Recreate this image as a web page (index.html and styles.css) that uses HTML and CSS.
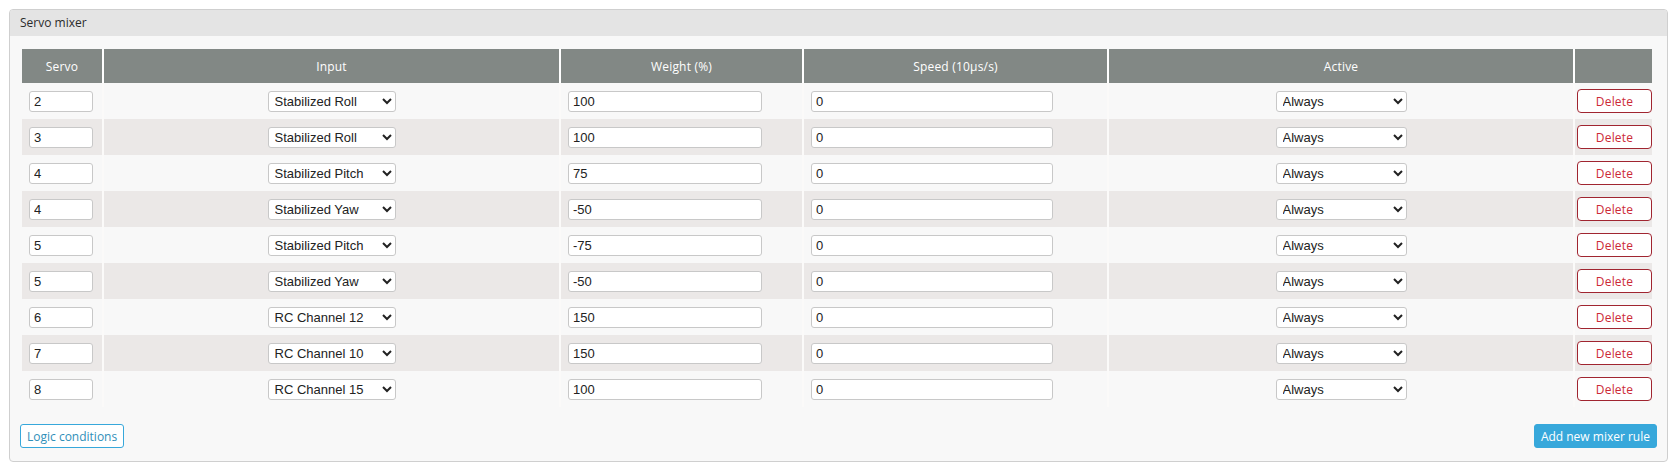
FILE: index.html
```html
<!DOCTYPE html>
<html>
<head>
<meta charset="utf-8">
<link rel="stylesheet" href="styles.css">
</head>
<body>
<div class="page">
  <div class="panel">
    <div class="panel-head">Servo mixer</div>
    <div class="panel-body">
      <table class="mixer">
        <colgroup>
          <col class="c-servo"><col class="c-input"><col class="c-weight"><col class="c-speed"><col class="c-active"><col class="c-del">
        </colgroup>
        <thead>
          <tr><th>Servo</th><th>Input</th><th>Weight (%)</th><th>Speed (10µs/s)</th><th>Active</th><th></th></tr>
        </thead>
        <tbody>
          <tr><td><input class="in-servo" value="2"></td><td class="ctr"><select class="sel-input"><option>Stabilized Roll</option></select></td><td><input class="in-weight" value="100"></td><td><input class="in-speed" value="0"></td><td class="ctr"><select class="sel-active"><option>Always</option></select></td><td class="ctr"><button class="btn-del">Delete</button></td></tr>
          <tr><td><input class="in-servo" value="3"></td><td class="ctr"><select class="sel-input"><option>Stabilized Roll</option></select></td><td><input class="in-weight" value="100"></td><td><input class="in-speed" value="0"></td><td class="ctr"><select class="sel-active"><option>Always</option></select></td><td class="ctr"><button class="btn-del">Delete</button></td></tr>
          <tr><td><input class="in-servo" value="4"></td><td class="ctr"><select class="sel-input"><option>Stabilized Pitch</option></select></td><td><input class="in-weight" value="75"></td><td><input class="in-speed" value="0"></td><td class="ctr"><select class="sel-active"><option>Always</option></select></td><td class="ctr"><button class="btn-del">Delete</button></td></tr>
          <tr><td><input class="in-servo" value="4"></td><td class="ctr"><select class="sel-input"><option>Stabilized Yaw</option></select></td><td><input class="in-weight" value="-50"></td><td><input class="in-speed" value="0"></td><td class="ctr"><select class="sel-active"><option>Always</option></select></td><td class="ctr"><button class="btn-del">Delete</button></td></tr>
          <tr><td><input class="in-servo" value="5"></td><td class="ctr"><select class="sel-input"><option>Stabilized Pitch</option></select></td><td><input class="in-weight" value="-75"></td><td><input class="in-speed" value="0"></td><td class="ctr"><select class="sel-active"><option>Always</option></select></td><td class="ctr"><button class="btn-del">Delete</button></td></tr>
          <tr><td><input class="in-servo" value="5"></td><td class="ctr"><select class="sel-input"><option>Stabilized Yaw</option></select></td><td><input class="in-weight" value="-50"></td><td><input class="in-speed" value="0"></td><td class="ctr"><select class="sel-active"><option>Always</option></select></td><td class="ctr"><button class="btn-del">Delete</button></td></tr>
          <tr><td><input class="in-servo" value="6"></td><td class="ctr"><select class="sel-input"><option>RC Channel 12</option></select></td><td><input class="in-weight" value="150"></td><td><input class="in-speed" value="0"></td><td class="ctr"><select class="sel-active"><option>Always</option></select></td><td class="ctr"><button class="btn-del">Delete</button></td></tr>
          <tr><td><input class="in-servo" value="7"></td><td class="ctr"><select class="sel-input"><option>RC Channel 10</option></select></td><td><input class="in-weight" value="150"></td><td><input class="in-speed" value="0"></td><td class="ctr"><select class="sel-active"><option>Always</option></select></td><td class="ctr"><button class="btn-del">Delete</button></td></tr>
          <tr><td><input class="in-servo" value="8"></td><td class="ctr"><select class="sel-input"><option>RC Channel 15</option></select></td><td><input class="in-weight" value="100"></td><td><input class="in-speed" value="0"></td><td class="ctr"><select class="sel-active"><option>Always</option></select></td><td class="ctr"><button class="btn-del">Delete</button></td></tr>
        </tbody>
      </table>
      <div class="footer">
        <button class="btn-outline">Logic conditions</button>
        <button class="btn-primary">Add new mixer rule</button>
      </div>
    </div>
  </div>
</div>
</body>
</html>
```

FILE: styles.css
```css
* { box-sizing: border-box; }
html, body { margin: 0; padding: 0; background: #ffffff; }
body { font-family: "Open Sans", "Liberation Sans", sans-serif; font-size: 12px; color: #333; }

.page { padding: 9px 7px 0 9px; }

.panel {
  border: 1px solid #cfcfcf;
  border-radius: 4px;
  background: #f8f8f8;
  overflow: hidden;
}
.panel-head {
  height: 26px;
  line-height: 26px;
  padding-left: 10px;
  background: #e4e4e4;
  color: #2b2b2b;
  font-size: 12px;
}
.panel-body { padding: 13px 0 13px 0; }

.mixer {
  width: 1630px;
  margin-left: 12px;
  table-layout: fixed;
  border-collapse: collapse;
}
.c-servo { width: 81px; }
.c-input { width: 457px; }
.c-weight { width: 243px; }
.c-speed { width: 305px; }
.c-active { width: 466px; }
.c-del { width: 78px; }

.mixer th {
  height: 34px;
  background: #828885;
  color: #ffffff;
  font-weight: normal;
  font-size: 12px;
  letter-spacing: 0.2px;
  text-align: center;
  border-right: 2px solid #ffffff;
  padding: 0;
}
.mixer th:last-child, .mixer td:last-child { border-right: none; }

.mixer td {
  height: 36px;
  padding: 0 0 0 7px;
  border-right: 2px solid #fbfaf9;
  vertical-align: middle;
}
.mixer td.ctr { text-align: center; padding: 0; }
.mixer td.ctr:last-child { padding-left: 2px; }
.mixer tbody tr:nth-child(even) td { background: #ebe8e7; }

input, select {
  font-family: "Liberation Sans", Arial, sans-serif;
  font-size: 13px;
  font-weight: 400;
  color: #222;
  height: 21px;
  border: 1px solid #c8c8c8;
  border-radius: 3px;
  background: #ffffff;
  margin: 0;
  vertical-align: middle;
}
input { padding: 0 0 0 4px; }
select { padding: 0 0 0 2px; }

.in-servo { width: 64px; }
.in-weight { width: 194px; }
.in-speed { width: 242px; }
.sel-input { width: 128px; }
.sel-active { width: 131px; }

button { font-family: "Open Sans", "Liberation Sans", sans-serif; font-size: 12px; cursor: pointer; margin: 0; }

.btn-del {
  width: 75px;
  height: 24px;
  background: #ffffff;
  border: 1px solid #a02530;
  border-radius: 4px;
  color: #cc2a37;
  letter-spacing: 0.2px;
  padding: 0;
  vertical-align: middle;
}

.footer {
  display: flex;
  justify-content: space-between;
  align-items: center;
  padding: 17px 10px 0 10px;
}
.btn-outline {
  height: 24px;
  padding: 0 6px;
  background: #ffffff;
  border: 1px solid #37a8db;
  border-radius: 3px;
  color: #2f8fb9;
}
.btn-primary {
  height: 24px;
  padding: 0 6px;
  background: #37a8db;
  border: 1px solid #37a8db;
  border-radius: 3px;
  color: #ffffff;
}
```
